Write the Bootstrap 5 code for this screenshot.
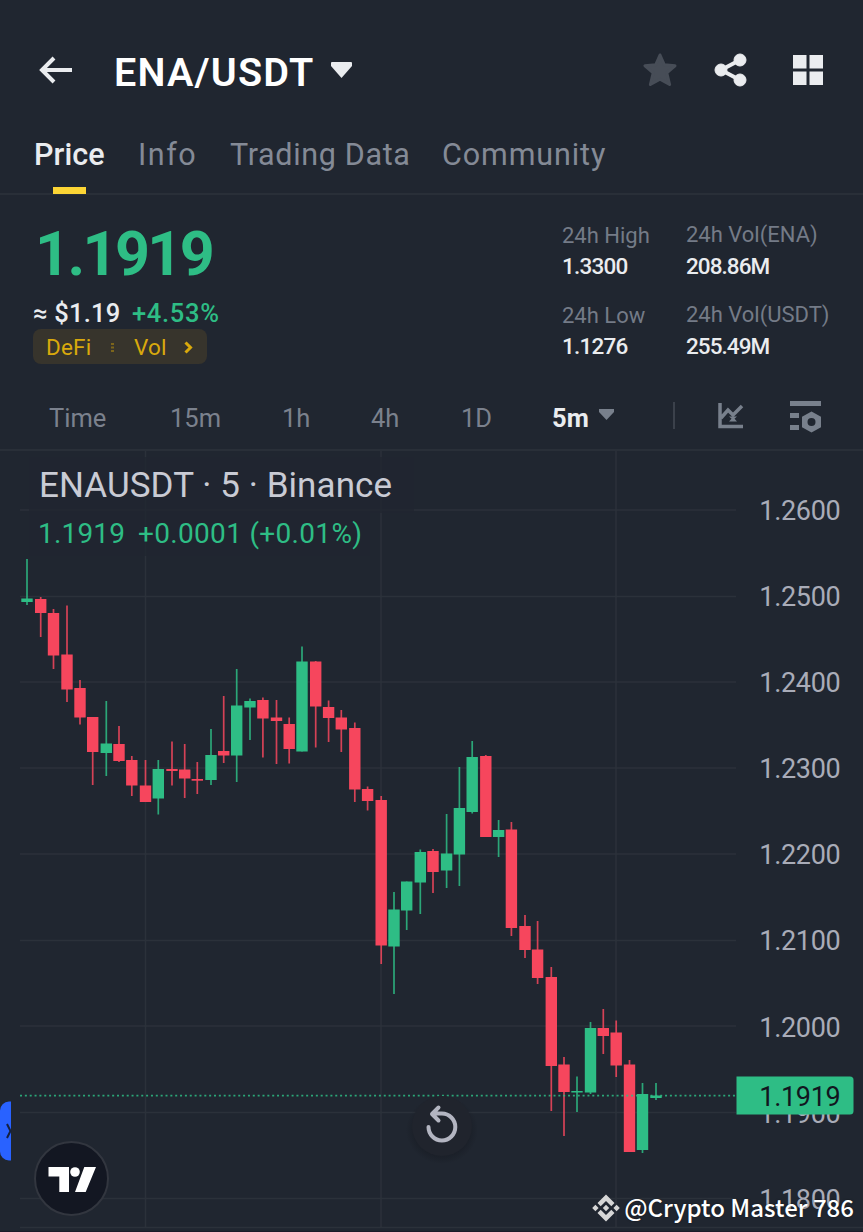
<!DOCTYPE html>
<html lang="en" data-bs-theme="dark">
<head>
<meta charset="utf-8">
<meta name="viewport" content="width=device-width, initial-scale=1">
<title>ENA/USDT</title>
<link href="https://cdn.jsdelivr.net/npm/bootstrap@5.3.0/dist/css/bootstrap.min.css" rel="stylesheet">
<style>
  body { background:#202630; color:#eaecef; font-family:Roboto,"Liberation Sans",sans-serif; width:863px; height:1232px; overflow:hidden; }
  svg { display:block; flex:none; }
  .topbar { height:125px; padding:15px 39px 0; }
  .pair { font-size:39.5px; font-weight:600; line-height:48px; letter-spacing:1.2px; color:#fff; width:217px; margin:5px 0 0 41px; }
  .tabs { height:70px; border-bottom:2px solid #292f38; padding-left:34px; font-size:30.5px; line-height:36px; letter-spacing:.65px; color:#848a96; }
  .tabs .tab-item { padding-top:12px; height:70px; }
  .tabs .tab-info { letter-spacing:1.5px; }
  .tab-on { color:#eaecef; font-weight:500; position:relative; letter-spacing:.1px; }
  .tab-on::after { content:""; position:absolute; left:19px; bottom:1px; width:33px; height:7px; background:#fcd535; }
  .summary { height:187px; padding-left:33px; }
  .big { font-size:61px; line-height:60px; font-weight:700; color:#2ebd85; letter-spacing:-2.6px; padding:29px 0 0 2px; }
  .approx { font-size:25.5px; line-height:30px; font-weight:500; margin-top:14px; letter-spacing:.2px; }
  .up { color:#2ebd85; letter-spacing:.7px; }
  .tagbox { width:174px; height:35px; margin-top:1px; border-radius:8px; background:#37342c; color:#d9a90c; font-size:22.5px; line-height:35px; padding:1px 0 0 13px; letter-spacing:.2px; }
  .stats { font-size:22px; line-height:26px; color:#747b87; }
  .stats .val { color:#eaecef; font-weight:500; font-size:22.5px; margin-top:5px; letter-spacing:-.8px; }
  .stats .vol { letter-spacing:-.95px; }
  .ranges { height:69px; font-size:25.5px; line-height:30px; color:#7b818d; border-bottom:2px solid #292f38; padding-left:49px; padding-top:21px; }
  .chart-area { height:781px; position:relative; }
  .chart-area text { font-family:Roboto,sans-serif; }
  .credit { right:9px; bottom:10px; color:#fff; font:500 24px/28px "Noto Sans CJK SC",sans-serif; text-shadow:0 0 2px #0008; white-space:nowrap; }
</style>
</head>
<body>
<header class="topbar d-flex align-items-center">
  <svg width="34" height="28" viewBox="0 0 34 28" fill="none" stroke="#eaecef" stroke-width="4"><path d="M33 14H4M15 2 3 14l12 12"/></svg>
  <div class="pair text-nowrap">ENA/USDT</div>
  <svg width="22" height="16" viewBox="0 0 22 16" fill="#eaecef"><path d="M0 1q0-1 1-1h19q1 0 1 1v3L10.500 16 0 4z"/></svg>
  <svg class="ms-auto" width="34" height="34" viewBox="0 0 34 34" fill="#474d57" stroke="#474d57" stroke-width="3" stroke-linejoin="round"><path d="m17 2 4.200 9.700 10.800 1.100-8.200 7 2.800 11.700-9.600-5.200-9.600 5.200 2.800-11.700-8.200-7 10.800-1.100z"/></svg>
  <svg style="margin-left:37px" width="34" height="34" viewBox="0 0 34 34" fill="#eaecef" stroke="#eaecef"><path d="M7 17 26 7M7 17l19 10" stroke-width="4"/><circle cx="7" cy="17" r="6"/><circle cx="26" cy="7" r="6"/><circle cx="26" cy="27" r="6"/></svg>
  <svg style="margin-left:45px" width="31" height="30" viewBox="0 0 31 30" fill="#eaecef"><path d="M0 0h13.500v13.500H0zM16.500 0H30v13.500H16.500zM0 16.500h13.500V30H0zM16.500 16.500H30V30H16.500z"/></svg>
</header>
<nav class="tabs d-flex text-nowrap">
  <div class="tab-item tab-on" style="width:104px">Price</div>
  <div class="tab-item tab-info" style="width:92px">Info</div>
  <div class="tab-item" style="width:212px">Trading Data</div>
  <div class="tab-item" style="letter-spacing:.9px">Community</div>
</nav>
<section class="summary d-flex text-nowrap">
  <div style="width:529px">
    <div class="big">1.1919</div>
    <div class="approx d-flex"><span style="width:99px">≈ $1.19</span><span class="up">+4.53%</span></div>
    <div class="tagbox d-flex align-items-center">
      <span style="width:65px">DeFi</span>
      <svg width="3" height="9" viewBox="0 0 3 9" fill="#7c651b"><path d="M0 0h3v2H0zM0 3.500h3v2H0zM0 7h3v2H0z"/></svg>
      <span style="width:50px;margin-left:20px">Vol</span>
      <svg width="9" height="13" viewBox="0 0 9 13" fill="none" stroke="#d9a90c" stroke-width="3"><path d="m1.500 1.500 5 5-5 5"/></svg>
    </div>
  </div>
  <div class="stats" style="width:124px;padding-top:28px">
    <div>24h High</div><div class="val" style="margin-top:4px">1.3300</div>
    <div style="margin-top:24px">24h Low</div><div class="val" style="margin-top:4px">1.1276</div>
  </div>
  <div class="stats" style="padding-top:27px">
    <div>24h Vol(ENA)</div><div class="val vol">208.86M</div>
    <div style="margin-top:23px">24h Vol(USDT)</div><div class="val vol">255.49M</div>
  </div>
</section>
<div class="ranges d-flex text-nowrap">
  <span style="width:121px">Time</span><span style="width:112px">15m</span><span style="width:89px">1h</span><span style="width:90px">4h</span><span style="width:91px">1D</span>
  <span class="fw-bold" style="width:47px;color:#eaecef">5m</span>
  <svg style="margin-top:6px" width="15" height="11" viewBox="0 0 15 11" fill="#78808c"><path d="M0 0h15v3l-7.500 8L0 3z"/></svg>
  <svg style="margin:-1px 0 0 59px" width="2" height="27"><path d="M1 0v27" stroke="#3b414b" stroke-width="2"/></svg>
  <svg style="margin-left:43px" width="26" height="26" viewBox="0 0 26 26" fill="none" stroke="#78808c" stroke-width="3.500"><path d="M2 0v23.500h23M3 15l7-8 5 5 9-9"/><path fill="#78808c" stroke="none" d="M11 13.500h8l-4 3.500zM15 14l4 4.500h-8z"/></svg>
  <svg style="margin:-2px 0 0 46px" width="32" height="33" viewBox="0 0 32 33" fill="#78808c"><path d="M0 0h31v5H0zM0 12h9v5H0zM0 24h9v5H0z"/><path fill-rule="evenodd" d="m21.500 10.500 9.500 5.300v10.400l-9.500 5.300-9.500-5.300V15.800zM21.500 17a4 4 0 1 0 0 8 4 4 0 0 0 0-8z"/></svg>
</div>
<main class="chart-area">
  <svg width="863" height="781" viewBox="0 451 863 781">
    <defs><radialGradient id="halo"><stop offset=".75" stop-color="#161a22" stop-opacity=".55"/><stop offset="1" stop-color="#161a22" stop-opacity="0"/></radialGradient></defs>
    <path id="grid" stroke="#2b313a" stroke-width="1.500" fill="none" d="M145.500 451V1227M381 451V1227M616 451V1227M20 510H736M20 596.500H736M20 682H736M20 768H736M20 854H736M20 940.500H736M20 1026H736M20 1112.500H736M20 1198.500H736M20 1227.500H863"/>
    <path fill="#202630" fill-opacity=".75" d="M29 457H414V513H370V556H29z"/>
    <g id="candles"></g>
    <path d="M20 1095.700H736" stroke="#2ebd85" stroke-opacity=".85" stroke-width="1.800" stroke-dasharray="2 2.850"/>
    <g fill="#c9cbd4"><text x="39" y="497" font-size="35" textLength="353">ENAUSDT · 5 · Binance</text></g>
    <g fill="#2ebd85" font-size="28"><text x="38" y="543" textLength="87">1.1919</text><text x="138" y="543" textLength="224">+0.0001 (+0.01%)</text></g>
    <g id="axis" fill="#a9acb8" font-size="27"></g>
    <path fill="#2ebd85" d="M736.500 1076.500H850q3.500 0 3.500 3.500v31q0 3.500-3.500 3.500H736.500z"/>
    <text x="759.300" y="1105.500" font-size="27" textLength="81.500" fill="#12161f">1.1919</text>
    <ellipse cx="442" cy="1130" rx="36" ry="34" fill="url(#halo)"/><circle cx="442" cy="1126" r="30" fill="#20242d"/>
    <path d="M428.500 1127a13.400 13.400 0 1 0 13.400-13.400H433M438.500 1107.500l-6.500 6.500 6.500 6.500" fill="none" stroke="#b3b5c1" stroke-width="4" stroke-linecap="round" stroke-linejoin="round"/>
    <path d="M11 1101.500v59H9a9 9 0 0 1-9-9v-41a9 9 0 0 1 9-9z" fill="#2962ff"/><path d="M7 1124l3.500 7-3.500 7" fill="none" stroke="#15203f" stroke-width="2"/>
    <circle cx="71.500" cy="1178.500" r="36.500" fill="#131722" stroke="#32363f" stroke-width="2"/>
    <g fill="#fff"><path d="M48.500 1167H69v25H59.300V1176.500H48.500zM84.300 1167H96l-10.300 25H75z"/><circle cx="75" cy="1172" r="4.800"/></g>
    <path d="M0 1231.500H863" stroke="#1c1a2a"/>
  </svg>
  <div class="credit position-absolute d-flex align-items-center" style="gap:4px">
    <svg width="28" height="28" viewBox="0 0 28 28" fill="#d6d6d6"><path d="m14 .5 8.500 8.500-3.200 3.200L14 7l-5.300 5.200L5.500 9zM14 27.500 5.500 19l3.200-3.200L14 21l5.300-5.200 3.200 3.200zM14 10.800l3.200 3.200-3.200 3.200-3.200-3.200zM3.400 10.800 6.600 14l-3.200 3.200L.2 14zM24.600 10.800l3.200 3.200-3.200 3.200-3.200-3.200z"/></svg>
    <span style="margin-top:-2px">@Crypto Master 786</span>
  </div>
</main>
<script>
  // centre x, direction, wick top, wick bottom, body top, body bottom
  const candles = [
    [27,1,559,605,598.5,602],[40.7,0,597,637,599,613],[53.5,0,609,669,613,655.5],[67,0,605.5,702,654.5,689.5],
    [80,0,680,724.5,688,717.5],[92.7,0,717,785,717,752],[106.3,1,701,776,743.5,753],[119,0,726,762,744,761],
    [131.8,0,756,796,760,785.5],[145.5,0,760,802,785.5,802],[158.3,1,760,814.5,769,798.5],[172,0,741.5,785.5,769,771],
    [184.7,0,744,798,769.5,778.5],[197.3,0,762,794,779,780.7],[211,1,729,785,755,780],[223.7,0,696,763,751,755.5],
    [236.7,1,669,782,705.5,755.5],[250,1,698.5,740,701,707.5],[262.9,0,697.5,757.5,700,718.5],[276.5,0,700,764,717.5,721],
    [289.2,0,717.5,763.5,724,749],[302,1,646.5,751.5,661.5,751.5],[315.7,0,661,747.5,661.5,706.5],[328.6,0,700.5,742,707,718],
    [341.3,0,710,752,717.5,729.5],[354.8,0,722.5,802,728,789.5],[367.6,0,786.5,810.5,789,801],[381.2,0,796,964,800,945.5],
    [394,1,892,994,909.5,946.5],[406.7,1,881.5,930,881.5,910.5],[420.3,1,849.5,914,852,882.5],[433,0,849,893,851,872],
    [446.6,1,814,888,853.5,870.5],[459.4,1,767,886,808,854.5],[472.2,1,741,813.5,757,812],[485.8,0,755,837,756,837],
    [498.6,1,820,857,830,837],[511.4,0,822,936,829.5,928],[525,0,915,958,926,950],[537.6,0,921,984,949.5,978],
    [551.3,0,967,1111,977,1066],[564,0,1057,1136,1064.5,1092],[577,1,1076.5,1112,1091,1092.5],[590.5,1,1022,1094,1028,1092.5],
    [603.3,0,1009,1054,1028,1036],[616.2,0,1020.5,1077,1032.5,1065.5],[629.5,0,1060,1152,1064.5,1152],[642.5,1,1083,1153,1094,1150],
    [656,1,1083,1100,1095.5,1098]
  ];
  document.getElementById('candles').innerHTML = candles.map(([x, up, h, l, t, b]) =>
    `<g fill="${up ? '#2ebd85' : '#f6465d'}"><rect x="${x - .85}" y="${h}" width="1.7" height="${l - h}" fill-opacity=".85"/><rect x="${x - 5.7}" y="${t}" width="11.4" height="${b - t}"/></g>`).join('');
  document.getElementById('axis').innerHTML = [1.26,1.25,1.24,1.23,1.22,1.21,1.2,1.19,1.18].map((p, i) =>
    `<text x="759.3" y="${519.7 + i * 86.15}" textLength="81.5">${p.toFixed(4)}</text>`).join('');
</script>
<script src="https://cdn.jsdelivr.net/npm/bootstrap@5.3.0/dist/js/bootstrap.bundle.min.js"></script>
</body>
</html>
